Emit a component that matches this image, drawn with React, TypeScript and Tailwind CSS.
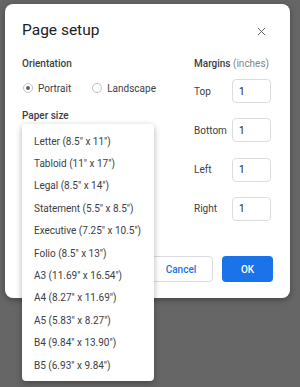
const sizes = [
  'Letter (8.5" x 11")',
  'Tabloid (11" x 17")',
  'Legal (8.5" x 14")',
  'Statement (5.5" x 8.5")',
  'Executive (7.25" x 10.5")',
  'Folio (8.5" x 13")',
  'A3 (11.69" x 16.54")',
  'A4 (8.27" x 11.69")',
  'A5 (5.83" x 8.27")',
  'B4 (9.84" x 13.90")',
  'B5 (6.93" x 9.84")',
];

const margins = ["Top", "Bottom", "Left", "Right"];

export default function App() {
  return (
    <div
      className="relative w-[300px] h-[387px] overflow-hidden bg-[#666666] pt-[4px] pl-[5px]"
      style={{ fontFamily: "Roboto, Arial, sans-serif" }}
    >
      {/* Dialog */}
      <div className="w-[285px] h-[294px] bg-white rounded-[8px] shadow-[0_2px_6px_rgba(0,0,0,0.35)] flex flex-col">
        <div className="flex items-center justify-between pl-[17px] pr-[24px] pt-[16px] h-[38px] shrink-0">
          <h1 className="text-[15.5px] text-[#202124] leading-none">Page setup</h1>
          <svg width="9" height="9" viewBox="0 0 10 10" className="text-[#5f6368]">
            <path d="M1 1L9 9M9 1L1 9" stroke="currentColor" strokeWidth="1.1" />
          </svg>
        </div>

        <div className="flex pl-[17px] pt-[16px]">
          {/* Left column */}
          <div className="w-[172px] flex flex-col">
            <div className="text-[10px] font-medium text-[#3c4043] leading-[12px]">Orientation</div>
            <div className="flex items-center mt-[12px] h-[12px] text-[10px] text-[#3c4043]">
              <span className="w-[10px] h-[10px] rounded-full border border-[#bdc1c6] flex items-center justify-center ml-[1px]">
                <span className="w-[4px] h-[4px] rounded-full bg-[#5f6368]" />
              </span>
              <span className="ml-[5px]">Portrait</span>
              <span className="w-[10px] h-[10px] rounded-full border border-[#bdc1c6] ml-[21px]" />
              <span className="ml-[5px]">Landscape</span>
            </div>
            <div className="text-[10px] font-medium text-[#3c4043] leading-[12px] mt-[16px]">Paper size</div>
            <div className="mt-[6px] w-[132px] h-[26px] border border-[#dadce0] rounded-[4px]" />
          </div>

          {/* Right column */}
          <div className="flex flex-col">
            <div className="text-[10px] leading-[12px] text-[#3c4043]">
              <span className="font-medium">Margins</span>{" "}
              <span className="text-[#80868b]">(inches)</span>
            </div>
            <div className="flex flex-col gap-[15.3px] mt-[9px]">
              {margins.map((m) => (
                <div key={m} className="flex items-center h-[24px]">
                  <span className="w-[38px] text-[10px] text-[#3c4043]">{m}</span>
                  <div className="w-[39px] h-[24px] border border-[#dadce0] rounded-[4px] flex items-center pl-[6px] text-[10px] text-[#202124]">
                    1
                  </div>
                </div>
              ))}
            </div>
          </div>
        </div>

        <div className="flex justify-end gap-[9px] pr-[17px] mt-auto mb-[16px]">
          <button className="w-[64px] h-[26px] border border-[#dadce0] rounded-[4px] text-[10px] font-medium text-[#1a73e8]">
            Cancel
          </button>
          <button className="w-[51px] h-[26px] rounded-[4px] bg-[#1a73e8] text-[10px] font-medium text-white">
            OK
          </button>
        </div>
      </div>

      {/* Paper size dropdown menu */}
      <div className="absolute left-[22px] top-[124px] w-[132px] h-[257px] bg-white rounded-[4px] shadow-[0_2px_6px_rgba(0,0,0,0.3)] py-[6px]">
        {sizes.map((s) => (
          <div key={s} className="h-[22.4px] flex items-center pl-[12px] text-[10px] text-[#3c4043]">
            {s}
          </div>
        ))}
      </div>
    </div>
  );
}
